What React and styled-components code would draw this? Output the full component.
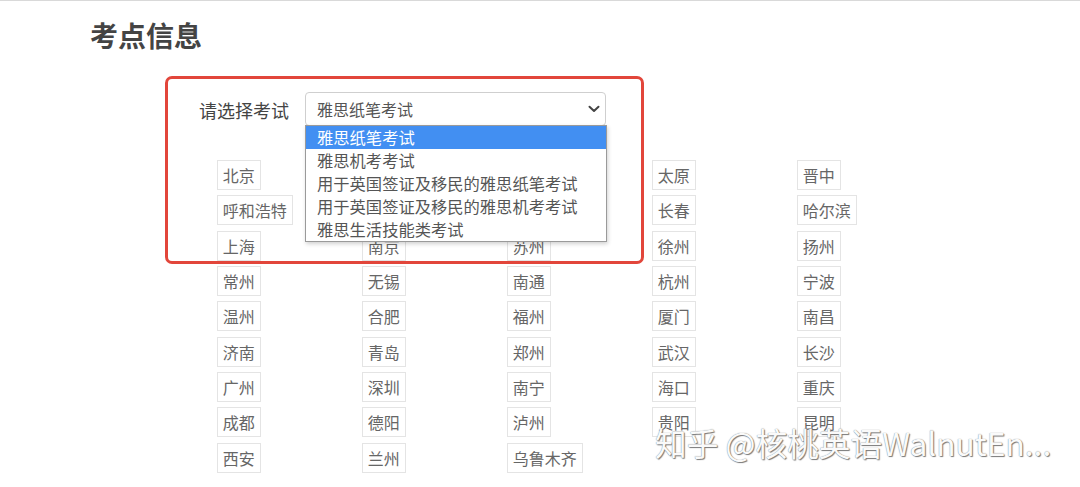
import React from 'react';
import styled, { createGlobalStyle } from 'styled-components';

const GlobalStyle = createGlobalStyle`
  body {
    margin: 0;
    background: #ffffff;
    font-family: "Noto Sans CJK SC", "Noto Sans", "Liberation Sans", sans-serif;
  }
`;

const Page = styled.div`
  position: relative;
  width: 1080px;
  height: 486px;
  border-top: 1px solid #d9d9d9;
  padding-left: 90px;
  box-sizing: border-box;
  overflow: hidden;
`;

const Title = styled.h2`
  margin: 0;
  padding-top: 17px;
  height: 34px;
  font-size: 28px;
  line-height: 34px;
  font-weight: 700;
  color: #444444;
`;

const FormRow = styled.div`
  display: flex;
  align-items: flex-start;
  height: 34px;
  margin: 40px 0 0 109px;
`;

const Label = styled.span`
  width: 90px;
  margin-right: 16px;
  padding-top: 3px;
  font-size: 18px;
  line-height: 31px;
  color: #444444;
`;

const SelectWrap = styled.div`
  position: relative;
`;

const SelectBox = styled.div`
  display: flex;
  align-items: center;
  justify-content: space-between;
  width: 301px;
  height: 34px;
  box-sizing: border-box;
  padding: 0 5px 0 11px;
  border: 1px solid #cfcfcf;
  border-radius: 4px;
  background: #ffffff;
  font-size: 16px;
  color: #555555;
`;

const Menu = styled.ul`
  position: absolute;
  left: 0;
  top: 33px;
  width: 302px;
  margin: 0;
  padding: 0;
  list-style: none;
  box-sizing: border-box;
  border: 1px solid #9a9a9a;
  background: #ffffff;
  box-shadow: 1px 2px 4px rgba(0, 0, 0, 0.18);
  z-index: 2;
`;

const MenuItem = styled.li`
  height: 23px;
  padding-left: 11px;
  font-size: 16.3px;
  line-height: 23px;
  white-space: nowrap;
  color: ${(p) => (p.$active ? '#ffffff' : '#555555')};
  background: ${(p) => (p.$active ? '#428ff2' : 'transparent')};
`;

const CityGrid = styled.div`
  display: grid;
  grid-template-columns: repeat(5, 145px);
  grid-auto-rows: 30px;
  row-gap: 5.33px;
  justify-items: start;
  margin: 34px 0 0 126.7px;
`;

const City = styled.span`
  display: block;
  height: 30px;
  box-sizing: border-box;
  padding: 0 5px;
  border: 1px solid #e4e4e4;
  font-size: 16px;
  line-height: 28px;
  color: #666666;
`;

const Highlight = styled.div`
  position: absolute;
  left: 165px;
  top: 75px;
  width: 479px;
  height: 188px;
  box-sizing: border-box;
  border: 3px solid #e2463b;
  border-radius: 7px;
  pointer-events: none;
`;

const Watermark = styled.div`
  position: absolute;
  left: 655px;
  top: 422px;
  font-size: 31.7px;
  line-height: 38px;
  white-space: nowrap;
  color: #fafafa;
  text-shadow: 0 0 1px #6f6f6f, 1px 1px 1px #7a7a7a;
  pointer-events: none;
`;

const Chevron = () => (
  <svg width="12" height="8" viewBox="0 0 12 8" fill="none">
    <path d="M1.5 1.8 L6 6 L10.5 1.8" stroke="#444" strokeWidth="2" strokeLinecap="round" strokeLinejoin="round" />
  </svg>
);

const exams = [
  '雅思纸笔考试',
  '雅思机考考试',
  '用于英国签证及移民的雅思纸笔考试',
  '用于英国签证及移民的雅思机考考试',
  '雅思生活技能类考试',
];

// cells under the open menu are left empty
const cities = [
  '北京', null, null, '太原', '晋中',
  '呼和浩特', null, null, '长春', '哈尔滨',
  '上海', '南京', '苏州', '徐州', '扬州',
  '常州', '无锡', '南通', '杭州', '宁波',
  '温州', '合肥', '福州', '厦门', '南昌',
  '济南', '青岛', '郑州', '武汉', '长沙',
  '广州', '深圳', '南宁', '海口', '重庆',
  '成都', '德阳', '泸州', '贵阳', '昆明',
  '西安', '兰州', '乌鲁木齐',
];

function App() {
  return (
    <>
      <GlobalStyle />
      <Page>
        <Title>考点信息</Title>
        <FormRow>
          <Label>请选择考试</Label>
          <SelectWrap>
            <SelectBox>
              <span>{exams[0]}</span>
              <Chevron />
            </SelectBox>
            <Menu>
              {exams.map((e, i) => (
                <MenuItem key={e} $active={i === 0}>{e}</MenuItem>
              ))}
            </Menu>
          </SelectWrap>
        </FormRow>
        <CityGrid>
          {cities.map((c, i) => (c ? <City key={i}>{c}</City> : <span key={i} />))}
        </CityGrid>
        <Highlight />
        <Watermark>知乎 @核桃英语WalnutEn...</Watermark>
      </Page>
    </>
  );
}

export default App;
